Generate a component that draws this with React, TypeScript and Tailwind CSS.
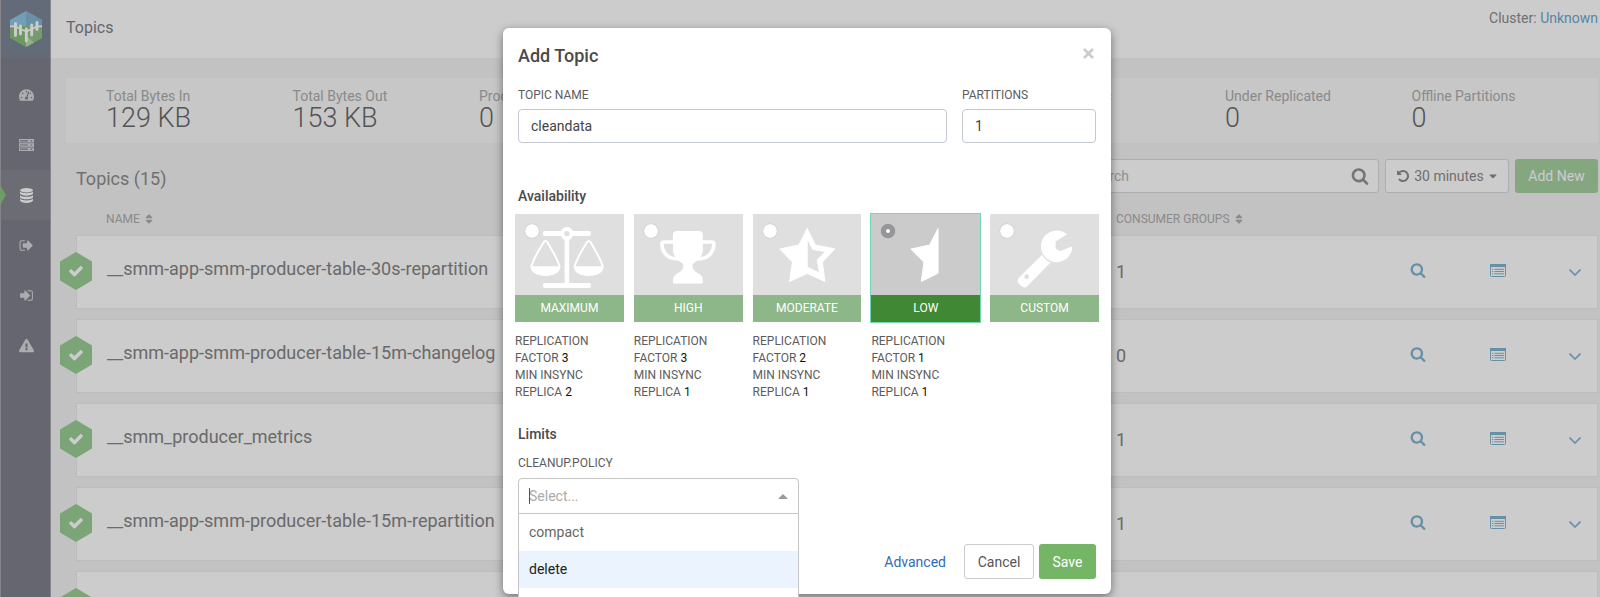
import type { ReactNode } from "react";
import { FaCaretDown, FaExclamationTriangle, FaSort, FaTachometerAlt } from "react-icons/fa";

const SEARCH =
  "M1216 832q0-185-131.5-316.5t-316.5-131.5-316.5 131.5-131.5 316.5 131.5 316.5 316.5 131.5 316.5-131.5 131.5-316.5zm512 832q0 52-38 90t-90 38q-54 0-90-38l-343-342q-179 124-399 124-143 0-273.5-55.5t-225-150-150-225-55.5-273.5 55.5-273.5 150-225 225-150 273.5-55.5 273.5 55.5 225 150 150 225 55.5 273.5q0 220-124 399l343 343q37 37 37 90z";
const UNDO =
  "M1664 896q0 156-61 298t-164 245-245 164-298 61q-172 0-327-72.5t-264-204.5q-7-10-6.5-22.5t8.5-20.5l137-138q10-9 25-9 16 2 23 12 73 95 179 147t225 52q104 0 198.5-40.5t163.5-109.5 109.5-163.5 40.5-198.5-40.5-198.5-109.5-163.5-163.5-109.5-198.5-40.5q-98 0-188 35.5t-160 101.5l137 138q31 30 14 69-17 40-59 40h-448q-26 0-45-19t-19-45v-448q0-42 40-59 39-17 69 14l130 129q107-101 244.5-156.5t284.5-55.5q156 0 298 61t245 164 164 245 61 298z";
const CHECK =
  "M1671 566q0 40-28 68l-724 724-136 136q-28 28-68 28t-68-28l-136-136-362-362q-28-28-28-68t28-68l136-136q28-28 68-28t68 28l294 295 656-657q28-28 68-28t68 28l136 136q28 28 28 68z";
const SIGN_OUT =
  "M704 1440q0 4 1 20t.5 26.5-3 23.5-10 19.5-20.5 6.5h-320q-119 0-203.5-84.5t-84.5-203.5v-704q0-119 84.5-203.5t203.5-84.5h320q13 0 22.5 9.5t9.5 22.5q0 4 1 20t.5 26.5-3 23.5-10 19.5-20.5 6.5h-320q-66 0-113 47t-47 113v704q0 66 47 113t113 47h312l11.5 1 11.5 3 8 5.5 7 9 2 13.5zm928-544q0 26-19 45l-544 544q-19 19-45 19t-45-19-19-45v-288h-448q-26 0-45-19t-19-45v-384q0-26 19-45t45-19h448v-288q0-26 19-45t45-19 45 19l544 544q19 19 19 45z";
const SIGN_IN =
  "M1312 896q0 26-19 45l-544 544q-19 19-45 19t-45-19-19-45v-288h-448q-26 0-45-19t-19-45v-384q0-26 19-45t45-19h448v-288q0-26 19-45t45-19 45 19l544 544q19 19 19 45zm352-352v704q0 119-84.5 203.5t-203.5 84.5h-320q-13 0-22.5-9.5t-9.5-22.5q0-4-1-20t-.5-26.5 3-23.5 10-19.5 20.5-6.5h320q66 0 113-47t47-113v-704q0-66-47-113t-113-47h-312l-11.5-1-11.5-3-8-5.5-7-9-2-13.5q0-4-1-20t-.5-26.5 3-23.5 10-19.5 20.5-6.5h320q119 0 203.5 84.5t84.5 203.5z";

type Stat = { label: string; value: string };

type Level = {
  id: string;
  label: string;
  factor?: number;
  insync?: number;
  art: ReactNode;
};

const stats: Stat[] = [
  { label: "Total Bytes In", value: "129 KB" },
  { label: "Total Bytes Out", value: "153 KB" },
  { label: "Produced Per Sec", value: "0" },
  { label: "Fetched Per Sec", value: "0" },
  { label: "In Sync Replicas", value: "0" },
  { label: "Out Of Sync", value: "0" },
  { label: "Under Replicated", value: "0" },
  { label: "Offline Partitions", value: "0" },
];

const topics = [
  { name: "__smm-app-smm-producer-table-30s-repartition", groups: 1 },
  { name: "__smm-app-smm-producer-table-15m-changelog", groups: 0 },
  { name: "__smm_producer_metrics", groups: 1 },
  { name: "__smm-app-smm-producer-table-15m-repartition", groups: 1 },
  { name: "__smm_consumer_metrics", groups: 1 },
];

const levels: Level[] = [
  {
    id: "maximum",
    label: "MAXIMUM",
    factor: 3,
    insync: 2,
    art: (
      <>
        <rect x="28" y="17" width="48" height="5" rx="2" />
        <rect x="28" y="69" width="48" height="5" rx="2" />
        <rect x="49.7" y="22" width="4.6" height="49" />
        <circle cx="52" cy="19.5" r="6.5" />
        <circle cx="52" cy="19.5" r="2.6" className="fill-[#dfdfdf]" />
        {[0, 43.3].map((dx) => (
          <g key={dx} transform={`translate(${dx} 0)`}>
            <path
              d="M16.5 53C17 47 23 38 28.6 28.4q2-3 4 0C38 38 44 47 44.5 53"
              fill="none"
              stroke="currentColor"
              strokeWidth="2"
            />
            <path d="M15.5 52.3h30C45.5 59 38.5 62 30.5 62s-15-3-15-9.7z" />
          </g>
        ))}
      </>
    ),
  },
  {
    id: "high",
    label: "HIGH",
    factor: 3,
    insync: 1,
    art: (
      <>
        <path d="M43 17h22q4 0 4 4v14c0 7-4 11-9 14-2 1.500-2 4 0 7 2.500 3.500 9 4 9 10v2.500q0 1-1 1H40q-1 0-1-1V66c0-6 6.500-6.500 9-10 2-3 2-5.500 0-7-5-3-9-7-9-14V21q0-4 4-4z" />
        <path
          d="M40 28H30q-2.500 0-2 3C29 40 35 45 45 45M68 28h10q2.500 0 2 3C79 40 73 45 63 45"
          fill="none"
          stroke="currentColor"
          strokeWidth="3.600"
        />
      </>
    ),
  },
  {
    id: "moderate",
    label: "MODERATE",
    factor: 2,
    insync: 1,
    art: (
      <path
        fillRule="evenodd"
        stroke="currentColor"
        strokeWidth="1"
        strokeLinejoin="round"
        d="M54.300 14.500 62.500 31 82 35 69.500 48 72 67.500 54.300 59.500 36.800 67.500 39.500 48 26.800 35 46 31zM54.300 24 59.800 35.500 72.500 37.500 64.500 46 66.500 59 54.300 53z"
      />
    ),
  },
  {
    id: "low",
    label: "LOW",
    factor: 1,
    insync: 1,
    art: (
      <path
        stroke="currentColor"
        strokeWidth="1"
        strokeLinejoin="round"
        d="M67.200 14.500V59.200L50.500 67.500 53 48.300 40 35 58.800 31z"
      />
    ),
  },
  {
    id: "custom",
    label: "CUSTOM",
    art: (
      <>
        <path
          d="M54 42 30.500 65.500q-1 1.500 0 2.500l2.800 2.800q1.500 1 2.500 0L59 47z"
          stroke="currentColor"
          strokeWidth="4.500"
          strokeLinejoin="round"
        />
        <circle cx="67.300" cy="32.500" r="17.300" className="fill-[#dfdfdf]" />
        <path
          d="M76 20 65 27v8l5 3 11.800-4.500A15 15 0 1 1 60 19Q68 15 76 20z"
          stroke="currentColor"
          strokeWidth="1.500"
          strokeLinejoin="round"
        />
        <circle cx="36.700" cy="62.700" r="2.300" className="fill-[#dfdfdf]" />
      </>
    ),
  },
];

function Glyph({ d, className }: { d: string; className: string }) {
  return (
    <svg viewBox="0 0 1792 1792" fill="currentColor" className={className} aria-hidden="true">
      <path d={d} />
    </svg>
  );
}

function Logo() {
  return (
    <svg viewBox="0 0 32 36" className="h-9 w-8" aria-hidden="true">
      <path d="M16 0 32 9v6H0V9z" fill="#90c6e6" />
      <path d="M16 0 32 9v6H16z" fill="#82b4d2" />
      <path d="M0 15h32v12l-16 9-16-9z" fill="#86c078" />
      <path d="M16 15h16v12l-16 9z" fill="#92c288" />
      <path d="M16 24 24 31.500 16 36z" fill="#b8dcb0" />
      <g stroke="#fff" strokeLinecap="round" fill="none">
        <path
          d="M5.500 12.500v12M10.500 15v8M16.300 18v12M21.700 14v10M27 11.500v7"
          strokeWidth="2.900"
        />
        <path d="M0 15.300h5.500l5 3 5.800 2 5.400-2 5.300-3h5" strokeWidth="1.800" strokeLinecap="butt" />
      </g>
    </svg>
  );
}

function ServerIcon() {
  return (
    <svg viewBox="0 0 15 12" fill="currentColor" className="h-3 w-[15px]" aria-hidden="true">
      {[0, 4.2, 8.4].map((y) => (
        <g key={y} transform={`translate(0 ${y})`}>
          <path fillRule="evenodd" d="M0 0h15v3.600H0zM1 1.200v1.200h8V1.200zM11.500 1.200v1.200h1.800V1.200z" />
        </g>
      ))}
    </svg>
  );
}

function DatabaseIcon() {
  return (
    <svg viewBox="0 0 13 15" fill="currentColor" className="h-[15px] w-[13px]" aria-hidden="true">
      <ellipse cx="6.500" cy="2.200" rx="6.500" ry="2.200" />
      <path d="M0 3.600c2 2.200 11 2.200 13 0v2C12 8.400 1 8.400 0 5.600zM0 7.200c2 2.200 11 2.200 13 0v2c-1 2.800-12 2.800-13 0zM0 10.800c2 2.200 11 2.200 13 0v1.700c-1 3.200-12 3.200-13 0z" />
    </svg>
  );
}

function ListIcon() {
  return (
    <svg viewBox="0 0 16 13" className="h-[13px] w-4" aria-hidden="true">
      <rect x=".5" y=".5" width="15" height="12" rx="1" fill="none" stroke="currentColor" />
      <path d="M0 0h16v3H0z" fill="currentColor" />
      <path d="M4.500 5.300H14M4.500 7.500H14M4.500 9.800H14M2 5.300h1.300M2 7.500h1.300M2 9.800h1.300" stroke="currentColor" />
    </svg>
  );
}

function HexCheck() {
  return (
    <span className="absolute top-4 -left-[17px] flex h-[38px] w-8 items-center justify-center">
      <svg viewBox="0 0 32 38" className="absolute inset-0 h-full w-full" aria-hidden="true">
        <path d="M16 0 32 9.500v19L16 38 0 28.500v-19z" fill="#9acf95" />
      </svg>
      <Glyph d={CHECK} className="relative h-4 w-4 text-white" />
    </span>
  );
}

const nav = [
  { label: "Overview", icon: <FaTachometerAlt className="h-[14px] w-[15px]" /> },
  { label: "Brokers", icon: <ServerIcon /> },
  { label: "Topics", icon: <DatabaseIcon />, active: true },
  { label: "Producers", icon: <Glyph d={SIGN_OUT} className="h-[15px] w-[15px]" /> },
  { label: "Consumers", icon: <Glyph d={SIGN_IN} className="h-[15px] w-[15px]" /> },
  { label: "Alerts", icon: <FaExclamationTriangle className="h-[15px] w-[15px]" /> },
];

function Sidebar() {
  return (
    <aside className="w-[51px] shrink-0 border-x border-[#a5a6ad] bg-[#80808c]">
      <div className="mb-3 flex h-[58px] items-center justify-center bg-[#7d8696]">
        <Logo />
      </div>
      <nav>
        {nav.map((item) => (
          <a
            key={item.label}
            href="#"
            aria-label={item.label}
            className={`relative flex h-[50px] items-center justify-center pl-0.5 ${
              item.active ? "bg-[#878792] text-white" : "text-[#d8d8dc]"
            }`}
          >
            {item.active && (
              <svg viewBox="0 0 6 20" className="absolute top-[15px] -left-px h-5 w-1.5" aria-hidden="true">
                <path d="M0 0 6 10 0 20z" fill="#8dc485" />
              </svg>
            )}
            {item.icon}
          </a>
        ))}
      </nav>
    </aside>
  );
}

function StatsBar() {
  return (
    <div className="grid h-[65px] grid-cols-8 bg-[#f9f9f9] pt-2 pl-10">
      {stats.map((stat) => (
        <div key={stat.label}>
          <div className="text-sm leading-5 text-[#adadad]">{stat.label}</div>
          <div className="text-[27px] leading-6 font-light text-[#6a6a6a]">{stat.value}</div>
        </div>
      ))}
    </div>
  );
}

function Toolbar() {
  return (
    <div className="mt-4 flex h-[34px] items-center gap-1.5 pl-2.5">
      <h2 className="flex-1 pt-1.5 text-lg text-[#8c8c8c]">Topics (15)</h2>
      <div className="relative h-full w-[306px]">
        <input
          type="text"
          aria-label="Search"
          placeholder="Search"
          className="h-full w-full rounded-[3px] border border-[#d9dadd] bg-white px-3 text-sm placeholder:text-[#b5b5b5]"
        />
        <Glyph d={SEARCH} className="absolute top-2 right-2.5 h-[18px] w-[18px] text-[#949494]" />
      </div>
      <button className="flex h-full w-[124px] items-center justify-center gap-1 rounded-[3px] border border-[#d9dadd] bg-white text-sm text-[#8c8c8c]">
        <Glyph d={UNDO} className="h-[14px] w-[14px]" />
        30 minutes
        <FaCaretDown className="h-3 w-2.5" />
      </button>
      <button className="h-full w-[83px] rounded-[3px] bg-[#a7d19f] text-sm text-white">Add New</button>
    </div>
  );
}

function TopicTable() {
  return (
    <table className="ml-2.5 w-[calc(100%-10px)] table-fixed border-separate border-spacing-x-0 border-spacing-y-[10px]">
      <thead>
        <tr className="h-[22px] text-left text-xs text-[#adadad]">
          <th scope="col" className="pt-2.5 pl-[30px] font-normal">
            <span className="flex items-center gap-1 leading-3">
              NAME <FaSort className="h-3 w-2.5" />
            </span>
          </th>
          <th scope="col" className="w-[268px] pt-2.5 font-normal">
            <span className="flex items-center gap-1 leading-3">
              CONSUMER GROUPS <FaSort className="h-3 w-2.5" />
            </span>
          </th>
          <td className="w-20" />
          <td className="w-20" />
          <td className="w-[54px]" />
        </tr>
      </thead>
      <tbody className="text-lg text-[#858585]">
        {topics.map((topic) => (
          <tr key={topic.name} className="h-[74px]">
            <td className="relative border border-r-0 border-[#ececec] bg-white pb-1.5 pl-[30px]">
              <HexCheck />
              {topic.name}
            </td>
            <td className="border-y border-[#ececec] bg-white">{topic.groups}</td>
            <td className="border-y border-[#ececec] bg-white pb-1 text-[#7db4d3]">
              <button aria-label="Explore data" className="flex w-full justify-center pr-3">
                <Glyph d={SEARCH} className="h-4 w-4" />
              </button>
            </td>
            <td className="border-y border-[#ececec] bg-white pb-1 text-[#7db4d3]">
              <button aria-label="Topic details" className="flex w-full justify-center pr-3">
                <ListIcon />
              </button>
            </td>
            <td className="border border-l-0 border-[#ececec] bg-white pb-1 text-[#7db4d3]">
              <button aria-label="Expand row" className="flex w-full justify-center pt-1 pl-2">
                <svg viewBox="0 0 12 7" className="h-[7px] w-3" aria-hidden="true">
                  <path d="M.5.5 6 6 11.500.5" fill="none" stroke="currentColor" strokeWidth="1.600" />
                </svg>
              </button>
            </td>
          </tr>
        ))}
      </tbody>
    </table>
  );
}

function LevelCard({ level, selected }: { level: Level; selected: boolean }) {
  return (
    <div>
      <label
        className={`relative block ${
          selected ? "bg-[#cbcbcb] outline outline-[#74d8b8]" : "bg-[#dfdfdf]"
        }`}
      >
        <input
          type="radio"
          name="availability"
          value={level.id}
          defaultChecked={selected}
          className="absolute top-2.5 left-2.5 h-[14px] w-[14px] appearance-none rounded-full bg-white shadow-[0_0_1px_#999] checked:border-[5px] checked:border-[#95959a]"
        />
        <svg viewBox="0 0 109 81" fill="currentColor" className="h-[81px] w-full text-white" aria-hidden="true">
          {level.art}
        </svg>
        <span
          className={`block text-center text-xs leading-[27px] text-white ${
            selected ? "bg-[#418835]" : "bg-[#8db788]"
          }`}
        >
          {level.label}
        </span>
      </label>
      {level.factor && (
        <p className="mt-[11px] text-xs leading-[17px] text-[#5c5c5c]">
          REPLICATION
          <br />
          FACTOR <span className="text-[#111]">{level.factor}</span>
          <br />
          MIN INSYNC
          <br />
          REPLICA <span className="text-[#111]">{level.insync}</span>
        </p>
      )}
    </div>
  );
}

function PolicySelect() {
  return (
    <div className="relative w-[281px]">
      <div className="relative flex h-9 items-center rounded-t-[4px] border border-[#c4c4c4] bg-white">
        <input
          id="cleanup-policy"
          type="text"
          role="combobox"
          aria-expanded="true"
          aria-controls="policy-options"
          placeholder="Select..."
          className="h-full min-w-0 flex-1 pl-2.5 text-sm outline-none placeholder:text-[#aaa]"
        />
        <span className="absolute left-2.5 h-4 w-px bg-[#555]" />
        <span className="mr-2.5 border-x-[5px] border-b-[5px] border-x-transparent border-b-[#999]" />
      </div>
      <ul
        id="policy-options"
        role="listbox"
        className="absolute top-full right-0 left-0 border-x border-b border-[#c4c4c4] bg-white pb-9 text-sm leading-[37px] text-[#666]"
      >
        <li role="option" aria-selected="false" className="px-2.5">
          compact
        </li>
        <li role="option" aria-selected="true" className="bg-[#ebf3fe] px-2.5 text-[#222]">
          delete
        </li>
      </ul>
    </div>
  );
}

function AddTopicDialog() {
  return (
    <form
      role="dialog"
      aria-labelledby="dialog-title"
      className="w-[608px] rounded-md bg-white px-[15px] pb-[15px] shadow-[0_3px_10px_rgba(0,0,0,0.45)]"
    >
      <div className="flex items-start justify-between pt-4">
        <h1 id="dialog-title" className="text-lg leading-6 font-medium text-[#4a4a4a]">
          Add Topic
        </h1>
        <button type="button" aria-label="Close" className="pt-1 pr-0.5">
          <svg viewBox="0 0 11 11" className="h-[11px] w-[11px]" aria-hidden="true">
            <path d="M1 1 10 10M10 1 1 10" stroke="#ccc" strokeWidth="2.800" />
          </svg>
        </button>
      </div>

      <div className="mt-[19px] flex gap-[15px] text-sm text-[#444]">
        <div className="flex-1">
          <label htmlFor="topic-name" className="block text-xs leading-4 text-[#5c5c5c]">
            TOPIC NAME
          </label>
          <input
            id="topic-name"
            type="text"
            defaultValue="cleandata"
            className="mt-1.5 h-[34px] w-full rounded-[4px] border border-[#c3c8d2] px-3"
          />
        </div>
        <div className="w-[134px]">
          <label htmlFor="partitions" className="block text-xs leading-4 text-[#5c5c5c]">
            PARTITIONS
          </label>
          <input
            id="partitions"
            type="text"
            defaultValue="1"
            className="mt-1.5 h-[34px] w-full rounded-[4px] border border-[#c3c8d2] px-3"
          />
        </div>
      </div>

      <fieldset className="mt-[43px]">
        <legend className="text-sm leading-5 font-medium text-[#4a4a4a]">Availability</legend>
        <div className="-mx-[3px] mt-2 grid grid-cols-5 gap-2.5">
          {levels.map((level) => (
            <LevelCard key={level.id} level={level} selected={level.id === "low"} />
          ))}
        </div>
      </fieldset>

      <h2 className="mt-[23px] text-sm leading-5 font-medium text-[#4a4a4a]">Limits</h2>
      <label htmlFor="cleanup-policy" className="mt-[11px] mb-[7px] block text-xs leading-4 text-[#5c5c5c]">
        CLEANUP.POLICY
      </label>
      <PolicySelect />

      <div className="mt-[30px] flex items-center justify-end text-sm">
        <a href="#" className="mr-[18px] text-[#2f6db0]">
          Advanced
        </a>
        <button
          type="button"
          className="mr-[5px] h-[35px] w-[70px] rounded-[3px] border border-[#ccc] bg-white text-[#555]"
        >
          Cancel
        </button>
        <button type="submit" className="h-[35px] w-[57px] rounded-[3px] bg-[#74b566] text-white">
          Save
        </button>
      </div>
    </form>
  );
}

export default function App() {
  return (
    <div className="relative flex h-screen overflow-hidden bg-[#f3f3f3] font-[Roboto,sans-serif]">
      <Sidebar />
      <main className="min-w-0 flex-1">
        <header className="flex h-[58px] justify-between bg-white pr-0.5 pl-[15px]">
          <span className="pt-4 text-base text-[#7e818a]">Topics</span>
          <span className="pt-2 text-sm text-[#8c8c8c]">
            Cluster:{" "}
            <a href="#" className="text-[#6fa8cc]">
              Unknown
            </a>
          </span>
        </header>
        <div className="pt-5 pr-0.5 pl-[15px]">
          <StatsBar />
          <Toolbar />
          <TopicTable />
        </div>
      </main>

      <div className="absolute inset-0 flex items-start justify-center bg-black/20 pt-7 pl-[14px]">
        <AddTopicDialog />
      </div>
    </div>
  );
}
